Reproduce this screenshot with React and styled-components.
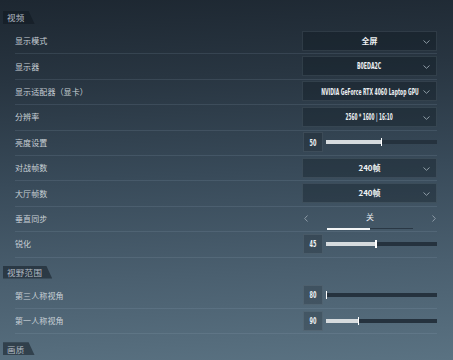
import React from 'react';
import styled, { createGlobalStyle } from 'styled-components';

const GlobalStyle = createGlobalStyle`
  html, body {
    margin: 0;
    padding: 0;
    width: 453px;
    height: 360px;
    overflow: hidden;
  }
  body {
    font-family: "Noto Sans CJK SC", "Noto Sans", sans-serif;
  }
`;

const Page = styled.div`
  width: 453px;
  height: 360px;
  box-sizing: border-box;
  padding-top: 3px;
  background: linear-gradient(177deg, #1d2731 0%, #283541 22%, #384a59 48%, #4a5f6f 74%, #5a7282 100%);
  overflow: hidden;
`;

const Section = styled.section`
  padding-top: 8px;
`;

const Tab = styled.div`
  display: flex;
  align-items: center;
  width: fit-content;
  height: 13px;
  margin-left: 3px;
  margin-bottom: 5px;
  padding: 0 10px 0 4px;
  background: rgba(14, 21, 29, 0.5);
  clip-path: polygon(0 0, calc(100% - 6px) 0, 100% 100%, 0 100%);
  color: #b4bdc5;
  font-size: 8.5px;
  line-height: 1;
  letter-spacing: 0.3px;
`;

const Row = styled.div`
  display: flex;
  align-items: center;
  justify-content: space-between;
  height: 25.4px;
  box-sizing: border-box;
  margin: 0 16px 0 15px;
  border-bottom: 1px solid rgba(160, 185, 205, 0.14);
`;

const Label = styled.span`
  color: #c8d0d6;
  font-size: 8px;
  line-height: 1;
  letter-spacing: 0.1px;
`;

const Control = styled.div`
  display: flex;
  align-items: center;
  width: 135px;
  height: 20px;
  margin-top: -1px;
`;

const Select = styled.div`
  position: relative;
  display: flex;
  align-items: center;
  justify-content: center;
  width: 100%;
  height: 100%;
  box-sizing: border-box;
  background: rgba(8, 15, 22, 0.3);
  border: 1px solid rgba(170, 190, 205, 0.14);
`;

const Chevron = styled.svg`
  position: absolute;
  right: 6px;
  top: 8px;
`;

const Value = styled.span`
  display: inline-block;
  color: #eef1f3;
  font-family: "DejaVu Sans", sans-serif;
  font-stretch: condensed;
  font-weight: bold;
  font-size: 9.5px;
  line-height: 1;
  transform: scaleX(${(p) => p.$squeeze || 0.55});
  white-space: nowrap;
`;

const CjkValue = styled.span`
  color: #eef1f3;
  font-size: 8px;
  font-weight: bold;
  line-height: 1;
`;

const NumBox = styled.div`
  display: flex;
  align-items: center;
  justify-content: center;
  flex: none;
  width: 20px;
  height: 20px;
  box-sizing: border-box;
  margin-left: 1px;
  background: rgba(8, 15, 22, 0.2);
  border: 1px solid rgba(170, 190, 205, 0.14);
`;

const Track = styled.div`
  position: relative;
  flex: 1;
  height: 4px;
  margin-left: 3px;
  background: #25323e;
`;

const Fill = styled.div`
  height: 100%;
  background: #d6dbde;
`;

const Knob = styled.div`
  position: absolute;
  top: -2px;
  width: 1.5px;
  height: 8px;
  background: #ffffff;
`;

const Switcher = styled.div`
  position: relative;
  display: flex;
  align-items: center;
  justify-content: space-between;
  width: 100%;
  height: 100%;
  padding: 0 1px 0 2px;
  box-sizing: border-box;
`;

const Arrow = styled.svg`
  flex: none;
`;

const SwitchText = styled.span`
  color: #e6eaed;
  font-size: 8px;
  line-height: 1;
  margin-top: -3px;
`;

const SwitchBar = styled.div`
  position: absolute;
  left: 25px;
  bottom: -1px;
  width: 86px;
  height: 1px;
  background: #2a3845;
`;

const SwitchBarOn = styled.div`
  position: absolute;
  left: 0;
  top: -0.5px;
  width: 50%;
  height: 2px;
  background: #f3f5f6;
`;

const ChevronDown = () => (
  <Chevron width="7" height="4" viewBox="0 0 7 4">
    <path d="M0.5 0.5 L3.5 3.3 L6.5 0.5" fill="none" stroke="#9aa7b1" strokeWidth="0.9" />
  </Chevron>
);

const SelectControl = ({ value, cjk, squeeze }) => (
  <Control>
    <Select>
      {cjk ? <CjkValue>{value}</CjkValue> : <Value $squeeze={squeeze}>{value}</Value>}
      <ChevronDown />
    </Select>
  </Control>
);

const SliderControl = ({ value, percent }) => (
  <Control>
    <NumBox>
      <Value $squeeze={0.58}>{value}</Value>
    </NumBox>
    <Track>
      <Fill style={{ width: `${percent}%` }} />
      <Knob style={{ left: `calc(${percent}% - 0.75px)` }} />
    </Track>
  </Control>
);

const SwitchControl = ({ value }) => (
  <Control>
    <Switcher>
      <Arrow width="4" height="7" viewBox="0 0 4 7">
        <path d="M3.5 0.5 L0.7 3.5 L3.5 6.5" fill="none" stroke="#95a3ae" strokeWidth="0.9" />
      </Arrow>
      <SwitchText>{value}</SwitchText>
      <Arrow width="4" height="7" viewBox="0 0 4 7">
        <path d="M0.5 0.5 L3.3 3.5 L0.5 6.5" fill="none" stroke="#95a3ae" strokeWidth="0.9" />
      </Arrow>
      <SwitchBar>
        <SwitchBarOn />
      </SwitchBar>
    </Switcher>
  </Control>
);

const App = () => (
  <>
    <GlobalStyle />
    <Page>
      <Section>
        <Tab>视频</Tab>
        <Row>
          <Label>显示模式</Label>
          <SelectControl value="全屏" cjk />
        </Row>
        <Row>
          <Label>显示器</Label>
          <SelectControl value="B0EDA2C" squeeze={0.55} />
        </Row>
        <Row>
          <Label>显示适配器（显卡）</Label>
          <SelectControl value="NVIDIA GeForce RTX 4060 Laptop GPU" squeeze={0.53} />
        </Row>
        <Row>
          <Label>分辨率</Label>
          <SelectControl value="2560 * 1600 | 16:10" squeeze={0.5} />
        </Row>
        <Row>
          <Label>亮度设置</Label>
          <SliderControl value="50" percent={50} />
        </Row>
        <Row>
          <Label>对战帧数</Label>
          <SelectControl value="240帧" cjk />
        </Row>
        <Row>
          <Label>大厅帧数</Label>
          <SelectControl value="240帧" cjk />
        </Row>
        <Row>
          <Label>垂直同步</Label>
          <SwitchControl value="关" />
        </Row>
        <Row>
          <Label>锐化</Label>
          <SliderControl value="45" percent={45} />
        </Row>
      </Section>
      <Section>
        <Tab>视野范围</Tab>
        <Row>
          <Label>第三人称视角</Label>
          <SliderControl value="80" percent={0.5} />
        </Row>
        <Row>
          <Label>第一人称视角</Label>
          <SliderControl value="90" percent={29.5} />
        </Row>
      </Section>
      <Section>
        <Tab>画质</Tab>
      </Section>
    </Page>
  </>
);

export default App;
